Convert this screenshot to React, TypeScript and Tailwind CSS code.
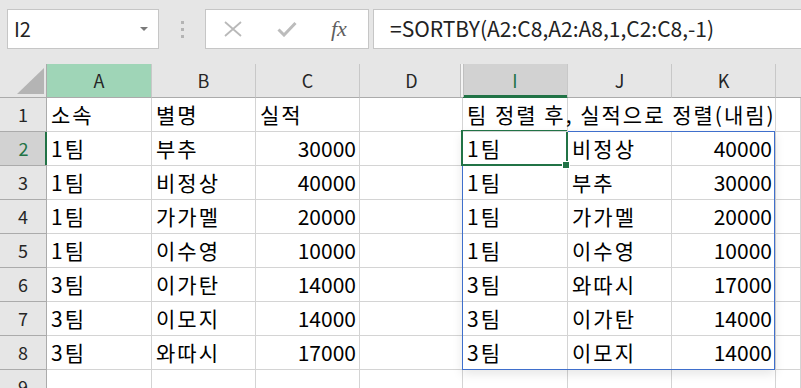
import React from "react";

const left: [string, string, string][] = [
  ["1팀", "부추", "30000"],
  ["1팀", "비정상", "40000"],
  ["1팀", "가가멜", "20000"],
  ["1팀", "이수영", "10000"],
  ["3팀", "이가탄", "14000"],
  ["3팀", "이모지", "14000"],
  ["3팀", "와따시", "17000"],
];
const right: [string, string, string][] = [
  ["1팀", "비정상", "40000"],
  ["1팀", "부추", "30000"],
  ["1팀", "가가멜", "20000"],
  ["1팀", "이수영", "10000"],
  ["3팀", "와따시", "17000"],
  ["3팀", "이가탄", "14000"],
  ["3팀", "이모지", "14000"],
];

const cell = "h-[34px] border-r border-b border-[#d4d4d4] flex items-center overflow-visible whitespace-nowrap text-[21px] text-black";
const txtL = cell + " pl-[4px] tracking-[2px]";
const txtR = cell + " justify-end pr-[3px]";
const rowHead = "h-[34px] border-r border-b border-[#ababab] bg-[#e6e6e6] flex items-center justify-center text-[18px] text-[#262626]";
const colHead = "h-[34px] border-r border-b border-b-[#ababab] border-r-[#c8c8c8] bg-[#e6e6e6] flex items-center justify-center text-[18px] text-[#262626]";

export default function App() {
  const rows = [];
  for (let r = 1; r <= 9; r++) {
    const isSel = r === 2;
    rows.push(
      <div
        key={"rh" + r}
        className={
          isSel
            ? "h-[34px] border-b border-[#ababab] bg-[#d2d2d2] shadow-[inset_-2px_0_0_#217346] flex items-center justify-center text-[18px] text-[#217346]"
            : rowHead
        }
      >
        {r}
      </div>
    );
    let a = "", b = "", c = "", i = "", j = "", k = "";
    if (r === 1) {
      a = "소속"; b = "별명"; c = "실적"; i = "팀 정렬 후, 실적으로 정렬(내림)";
    } else if (r <= 8) {
      [a, b, c] = left[r - 2];
      [i, j, k] = right[r - 2];
    }
    rows.push(<div key={"a" + r} className={txtL}>{a}</div>);
    rows.push(<div key={"b" + r} className={txtL}>{b}</div>);
    rows.push(<div key={"c" + r} className={r === 1 ? txtL : txtR}>{c}</div>);
    rows.push(<div key={"d" + r} className={cell}></div>);
    rows.push(
      <div key={"i" + r} className={txtL + (r === 1 ? " relative z-10" : "")}>
        {i}
      </div>
    );
    rows.push(
      <div key={"j" + r} className={r === 1 ? "h-[34px] border-b border-[#d4d4d4]" : txtL}>
        {r === 1 ? null : j}
      </div>
    );
    rows.push(
      <div key={"k" + r} className={r === 1 ? "h-[34px] border-r border-b border-[#d4d4d4]" : txtR}>
        {r === 1 ? null : k}
      </div>
    );
    rows.push(<div key={"l" + r} className={cell}></div>);
  }

  return (
    <div className="relative w-[801px] h-[388px] overflow-hidden bg-white font-['Noto_Sans_CJK_KR',sans-serif]">
      {/* Formula bar area */}
      <div className="h-[64px] bg-[#e6e6e6] flex items-start pt-[9px] pl-[7px]">
        <div className="w-[152px] h-[40px] bg-white border border-[#c6c6c6] flex items-center justify-between pl-[6px] pr-[10px]">
          <span className="text-[20px] text-[#222] leading-none">I2</span>
          <span className="w-0 h-0 border-l-[4px] border-r-[4px] border-t-[4px] border-l-transparent border-r-transparent border-t-[#7a7a7a]"></span>
        </div>
        <div className="w-[46px] h-[40px] flex flex-col items-center justify-center gap-[4px]">
          <span className="w-[3px] h-[3px] bg-[#b4b4b4]"></span>
          <span className="w-[3px] h-[3px] bg-[#b4b4b4]"></span>
          <span className="w-[3px] h-[3px] bg-[#b4b4b4]"></span>
        </div>
        <div className="w-[164px] h-[40px] bg-white border border-[#c6c6c6] flex items-center pl-[17px]">
          <svg width="20" height="16" viewBox="0 0 20 16" className="mr-[34px]">
            <path d="M2 1 L18 15 M18 1 L2 15" stroke="#b9b9b9" strokeWidth="1.8" fill="none" />
          </svg>
          <svg width="20" height="16" viewBox="0 0 20 16" className="mr-[34px]">
            <path d="M1.5 8.5 L7 14 L18.5 2" stroke="#bcbcbc" strokeWidth="3" fill="none" />
          </svg>
          <span className="font-['Liberation_Serif',serif] italic text-[22px] text-[#5e5e5e] leading-none">fx</span>
        </div>
        <div className="ml-[4px] flex-1 h-[40px] bg-white border border-[#c6c6c6] border-r-0 flex items-center pl-[16px]">
          <span className="text-[21px] text-[#222] whitespace-nowrap">=SORTBY(A2:C8,A2:A8,1,C2:C8,-1)</span>
        </div>
      </div>

      {/* Grid */}
      <div className="grid grid-cols-[47px_105px_104px_104px_103px_105px_104px_104px_1fr]">
        <div className="h-[34px] border-r border-b border-[#ababab] bg-[#e6e6e6] relative">
          <svg width="27" height="26" viewBox="0 0 27 26" className="absolute left-[17px] top-[4px]">
            <polygon points="27,0 27,26 0,26" fill="#b4b4b4" />
          </svg>
        </div>
        <div className="h-[34px] border-r border-b border-b-[#ababab] border-r-[#c8c8c8] bg-[#9fd5b7] flex items-center justify-center text-[18px] text-[#262626]">A</div>
        <div className={colHead}>B</div>
        <div className={colHead}>C</div>
        <div className="h-[34px] border-b border-b-[#ababab] bg-[#e6e6e6] shadow-[inset_-2px_0_0_#f4f4f4,inset_-3px_0_0_#c0c0c0] flex items-center justify-center text-[18px] text-[#262626]">D</div>
        <div className="h-[34px] border-r border-r-[#c8c8c8] bg-[#d2d2d2] shadow-[inset_1px_0_0_#c0c0c0,inset_0_-2px_0_#217346] border-b border-b-[#217346] flex items-center justify-center text-[18px] text-[#217346]">I</div>
        <div className={colHead}>J</div>
        <div className={colHead}>K</div>
        <div className="h-[34px] border-b border-b-[#ababab] bg-[#e6e6e6]"></div>
        {rows}
      </div>

      {/* Spill range border */}
      <div className="absolute left-[462px] top-[131px] w-[313px] h-[239px] border border-[#3f6fcc] shadow-[0_4px_10px_rgba(0,0,0,0.10)] pointer-events-none"></div>
      {/* Active cell */}
      <div className="absolute left-[461px] top-[130px] w-[107px] h-[36px] border-2 border-[#217346] pointer-events-none"></div>
      <div className="absolute left-[562px] top-[161px] w-[8px] h-[8px] bg-[#217346] border border-white pointer-events-none"></div>
    </div>
  );
}
